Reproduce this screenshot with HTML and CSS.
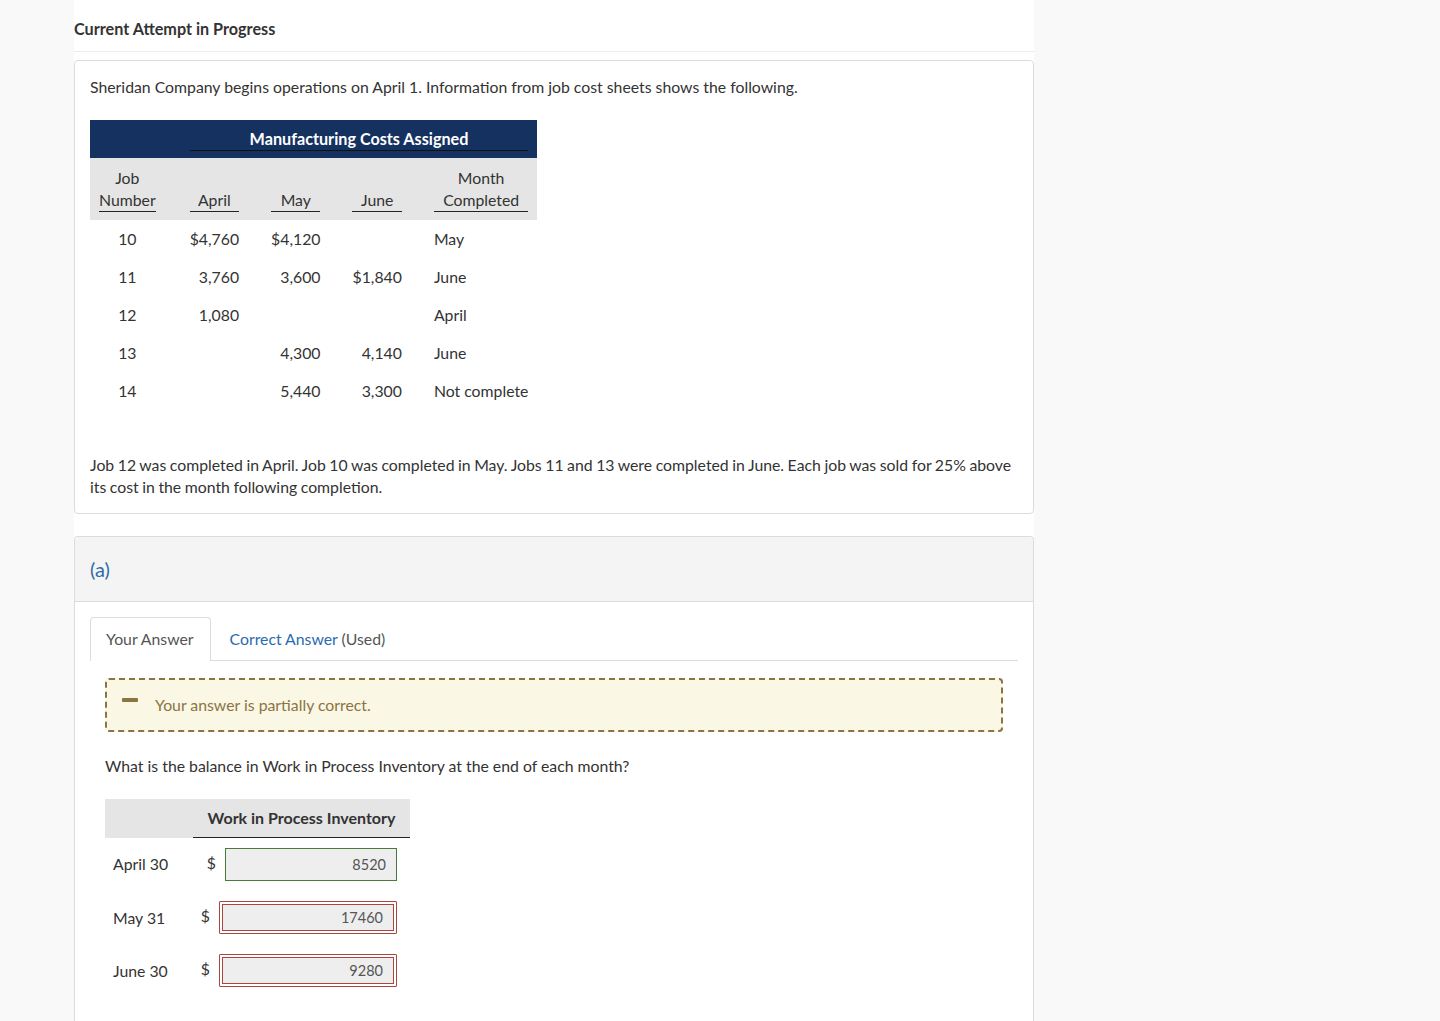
FILE: index.html
```html
<!DOCTYPE html>
<html lang="en">
<head>
<meta charset="utf-8">
<title>Current Attempt in Progress</title>
<link rel="stylesheet" href="styles.css">
</head>
<body>
<div class="page">
  <div class="attempt-header">Current Attempt in Progress</div>

  <div class="card">
    <p class="para">Sheridan Company begins operations on April 1. Information from job cost sheets shows the following.</p>

    <table class="jobs">
      <thead>
        <tr class="dark-row">
          <th class="c1"></th>
          <th class="cn" colspan="4"><div class="ul light">Manufacturing Costs Assigned</div></th>
        </tr>
        <tr class="gray-row">
          <th class="c1"><div>Job</div><div class="ul">Number</div></th>
          <th class="cn"><div class="ul">April</div></th>
          <th class="cn"><div class="ul">May</div></th>
          <th class="cn"><div class="ul">June</div></th>
          <th class="cn"><div>Month</div><div class="ul">Completed</div></th>
        </tr>
      </thead>
      <tbody>
        <tr><td class="c1 center">10</td><td class="cn num">$4,760</td><td class="cn num">$4,120</td><td class="cn num"></td><td class="cn left">May</td></tr>
        <tr><td class="c1 center">11</td><td class="cn num">3,760</td><td class="cn num">3,600</td><td class="cn num">$1,840</td><td class="cn left">June</td></tr>
        <tr><td class="c1 center">12</td><td class="cn num">1,080</td><td class="cn num"></td><td class="cn num"></td><td class="cn left">April</td></tr>
        <tr><td class="c1 center">13</td><td class="cn num"></td><td class="cn num">4,300</td><td class="cn num">4,140</td><td class="cn left">June</td></tr>
        <tr><td class="c1 center">14</td><td class="cn num"></td><td class="cn num">5,440</td><td class="cn num">3,300</td><td class="cn left">Not complete</td></tr>
      </tbody>
    </table>

    <p class="para after-table">Job 12 was completed in April. Job 10 was completed in May. Jobs 11 and 13 were completed in June. Each job was sold for 25% above its cost in the month following completion.</p>
  </div>

  <div class="part">
    <div class="part-header">(a)</div>
    <div class="part-body">
      <div class="tabs">
        <div class="tab active">Your Answer</div>
        <div class="tab"><span class="link">Correct Answer</span> (Used)</div>
      </div>
      <div class="pane">
        <div class="feedback">
          <span class="minus"></span>
          <span class="feedback-text">Your answer is partially correct.</span>
        </div>
        <p class="question">What is the balance in Work in Process Inventory at the end of each month?</p>

        <table class="wip">
          <thead>
            <tr>
              <th class="wl"></th>
              <th class="wh">Work in Process Inventory</th>
            </tr>
          </thead>
          <tbody>
            <tr>
              <td class="wl">April 30</td>
              <td class="wv"><div class="val"><span class="dollar">$</span><div class="input ok">8520</div></div></td>
            </tr>
            <tr>
              <td class="wl">May 31</td>
              <td class="wv"><div class="val"><span class="dollar">$</span><div class="wrong"><div class="input bad">17460</div></div></div></td>
            </tr>
            <tr>
              <td class="wl">June 30</td>
              <td class="wv"><div class="val"><span class="dollar">$</span><div class="wrong"><div class="input bad">9280</div></div></div></td>
            </tr>
          </tbody>
        </table>
      </div>
    </div>
  </div>
</div>
</body>
</html>
```

FILE: styles.css
```css
html, body {
  margin: 0;
  padding: 0;
}
body {
  background: #f9f9f9;
  font-family: Lato, "Open Sans", "Liberation Sans", sans-serif;
  font-size: 15.8px;
  line-height: 22px;
  color: #333;
}
.page {
  width: 960px;
  margin-left: 74px;
  background: #fff;
  min-height: 1021px;
}
.attempt-header {
  font-weight: 700;
  font-size: 16.2px;
  padding: 18px 0 11px;
  border-bottom: 1px solid #ececec;
}
.card {
  margin-top: 8px;
  border: 1px solid #dcdcdc;
  border-radius: 4px;
  padding: 15px;
}
.para {
  margin: 0;
}
.after-table {
  margin-top: 44px;
  word-spacing: -0.5px;
}
.jobs {
  margin-top: 22px;
  border-collapse: collapse;
}
.jobs th, .jobs td {
  padding: 0 8px 0 24px;
  font-weight: 400;
}
.jobs .c1 {
  padding-left: 9px;
  padding-right: 10px;
}
.jobs .cn:last-child {
  padding-right: 9px;
}
.dark-row {
  background: #14315f;
  color: #fff;
}
.dark-row th {
  height: 38px;
  vertical-align: top;
}
.dark-row .ul.light {
  font-weight: 700;
  font-size: 16.2px;
  padding-top: 8px;
  line-height: 22px;
  border-bottom: 1.5px solid #111;
  text-align: center;
}
.gray-row {
  background: #e5e5e5;
}
.jobs .gray-row th {
  vertical-align: bottom;
  padding-top: 9px;
  padding-bottom: 8px;
  text-align: center;
}
.gray-row .ul {
  border-bottom: 1.5px solid #222;
}
.jobs tbody td {
  height: 38px;
}
.center { text-align: center; }
.num { text-align: right; }
.left { text-align: left; }

.part {
  margin-top: 22px;
  border: 1px solid #dcdcdc;
  border-bottom: none;
  border-radius: 4px 4px 0 0;
}
.part-header {
  background: #f4f4f4;
  height: 64px;
  border-bottom: 1px solid #dcdcdc;
  display: flex;
  align-items: center;
  padding: 0 15px;
  font-size: 20px;
  color: #2f6ca6;
  border-radius: 4px 4px 0 0;
}
.part-body {
  padding: 15px 15px 40px;
}
.tabs {
  display: flex;
  border-bottom: 1px solid #dcdcdc;
}
.tab {
  height: 42px;
  line-height: 42px;
  padding: 0 15px;
  border: 1px solid transparent;
  border-bottom: none;
  border-radius: 4px 4px 0 0;
  color: #555;
  margin-right: 3px;
  margin-bottom: -1px;
}
.tab.active {
  border-color: #dcdcdc;
  background: #fff;
  height: 43px;
  padding: 0 16px 0 15px;
}
.link {
  color: #2a6bb0;
}
.pane {
  padding: 17px 15px 0;
}
.feedback {
  border: 2px dashed #8a7444;
  border-radius: 4px;
  background: #fbf7e5;
  padding: 14px 15px;
  display: flex;
  align-items: center;
}
.minus {
  width: 16px;
  height: 4px;
  background: #8a7444;
  border-radius: 1px;
  margin-right: 17px;
  margin-top: -10px;
}
.feedback-text {
  color: #8a7444;
}
.question {
  margin: 23px 0 22px;
}
.wip {
  border-collapse: collapse;
}
.wip th {
  background: #e5e5e5;
  height: 38px;
  font-weight: 700;
  font-size: 16px;
  padding: 0;
}
.wip th.wl {
  width: 88px;
}
.wip th.wh {
  width: 217px;
  text-align: center;
  border-bottom: 1.5px solid #222;
}
.wip td {
  height: 53px;
  padding: 0;
}
.wip td.wl {
  padding-left: 8px;
}
.val {
  display: flex;
  justify-content: flex-end;
  align-items: center;
  padding-right: 13px;
}
.dollar {
  margin-right: 9px;
  margin-top: -4px;
}
.input {
  box-sizing: border-box;
  width: 172px;
  height: 33px;
  line-height: 31px;
  background: #eeeeee;
  text-align: right;
  padding-right: 10px;
  font-size: 14.5px;
  color: #555;
  border: 1px solid #4a7a3b;
}
.wrong {
  border: 1px solid #a8463f;
  padding: 2px;
  border-radius: 1px;
}
.input.bad {
  border-color: #a8463f;
  height: 27px;
  line-height: 25px;
}
```
